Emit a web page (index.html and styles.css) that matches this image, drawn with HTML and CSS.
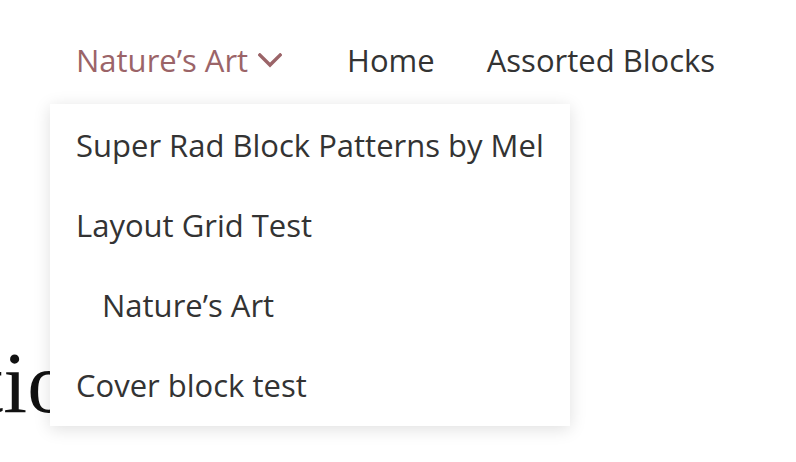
FILE: index.html
```html
<!DOCTYPE html>
<html lang="en">
<head>
<meta charset="utf-8">
<title>Navigation</title>
<link rel="stylesheet" href="styles.css">
</head>
<body>
<header class="site-header">
  <nav class="nav">
    <ul class="nav-list">
      <li class="nav-item has-sub">
        <a class="nav-link current" href="#">Nature’s Art</a>
        <span class="chevron">
          <svg width="24" height="15" viewBox="0 0 24 15"><polyline points="1.8,2 12,12 22.2,2" fill="none" stroke="currentColor" stroke-width="3.4" stroke-linecap="square" stroke-linejoin="miter"/></svg>
        </span>
        <ul class="submenu">
          <li><a href="#">Super Rad Block Patterns by Mel</a></li>
          <li><a href="#">Layout Grid Test</a></li>
          <li class="sub-child"><a href="#">Nature’s Art</a></li>
          <li><a href="#">Cover block test</a></li>
        </ul>
      </li>
      <li class="nav-item"><a class="nav-link" href="#">Home</a></li>
      <li class="nav-item"><a class="nav-link" href="#">Assorted Blocks</a></li>
    </ul>
  </nav>
</header>
<main class="content">
  <h1 class="page-title">Navigation</h1>
</main>
</body>
</html>
```
FILE: styles.css
```css
html {
  overflow: hidden;
}
html, body {
  margin: 0;
  padding: 0;
  background: #ffffff;
}
body {
  min-height: 462px;
  font-family: "Open Sans", "Noto Sans", sans-serif;
  color: #333333;
}
a {
  color: inherit;
  text-decoration: none;
}
.site-header {
  padding: 40px 0 0 76px;
  height: 40px;
  position: relative;
  z-index: 2;
}
.nav-list {
  list-style: none;
  margin: 0;
  padding: 0;
  display: flex;
  align-items: center;
  gap: 52px;
}
.nav-item {
  display: flex;
  align-items: center;
  position: relative;
  font-size: 31px;
  line-height: 40px;
}
.nav-link {
  color: #333333;
}
.nav-link.current {
  color: #9b6468;
}
.chevron {
  display: flex;
  color: #9b6468;
  margin-left: 10px;
  margin-right: 13px;
  margin-top: 1px;
}
.submenu {
  list-style: none;
  margin: 0;
  padding: 1px 0;
  position: absolute;
  top: 64px;
  left: -26px;
  width: 520px;
  background: #ffffff;
  box-shadow: 0 3px 16px rgba(0, 0, 0, 0.13);
}
.submenu li {
  line-height: 80px;
  padding-left: 26px;
  white-space: nowrap;
  color: #333333;
}
.submenu li.sub-child {
  padding-left: 52px;
}
.content {
  margin: 0;
  padding-bottom: 36px;
}
.page-title {
  margin: 260px 0 0 -269px;
  font-family: "Liberation Serif", "Times New Roman", serif;
  font-weight: 400;
  font-size: 86px;
  line-height: 1;
  color: #111111;
  white-space: nowrap;
}
```
